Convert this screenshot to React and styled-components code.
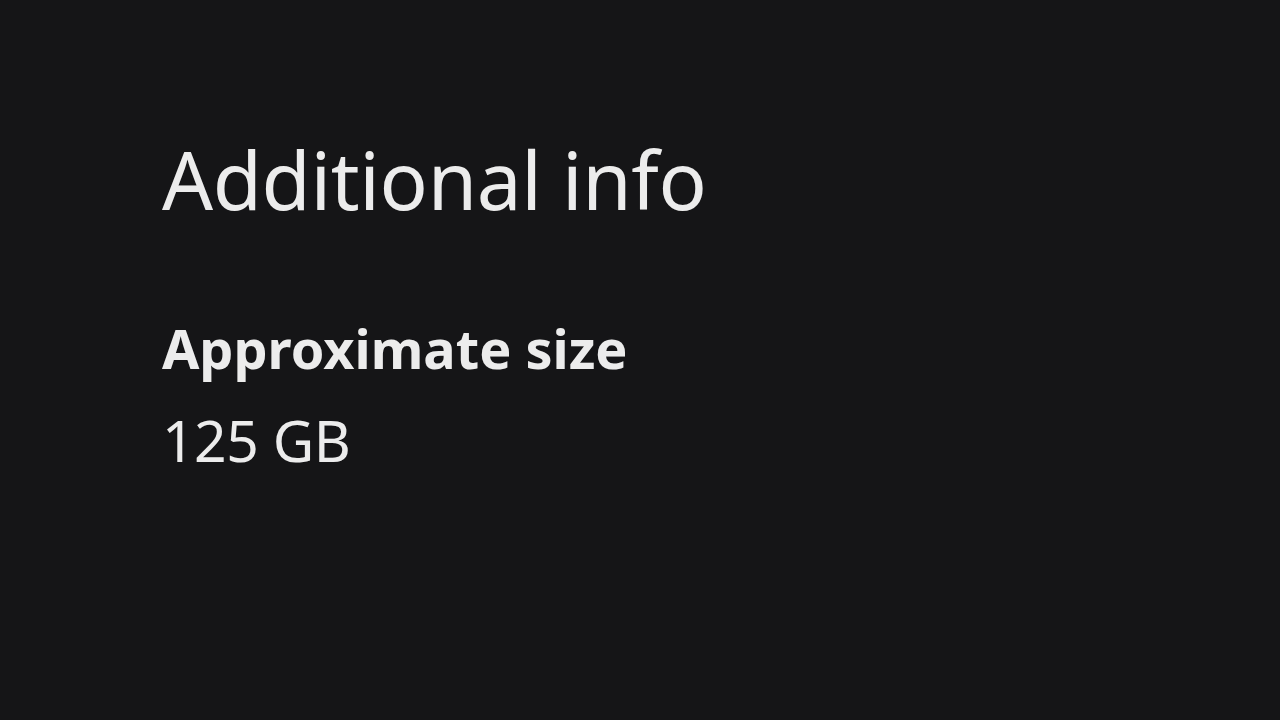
import styled, { createGlobalStyle } from "styled-components"

const GlobalStyle = createGlobalStyle`
  html, body {
    margin: 0;
    padding: 0;
    background: #151517;
  }
  body {
    font-family: "Noto Sans", "Open Sans", sans-serif;
  }
`

function App() {
  return (
    <Page>
      <GlobalStyle />
      <Section>
        <Title>Additional info</Title>
        <Detail>
          <Label>Approximate size</Label>
          <Value>125 GB</Value>
        </Detail>
      </Section>
    </Page>
  )
}

export default App

const Page = styled.div`
  width: 1280px;
  height: 720px;
  background: #151517;
  overflow: hidden;
`

const Section = styled.section`
  display: flex;
  flex-direction: column;
  padding: 125px 0 0 162px;
  color: #ececec;
`

const Title = styled.h1`
  margin: 0;
  font-size: 80px;
  font-weight: 400;
  line-height: 108px;
  letter-spacing: -0.35px;
`

const Detail = styled.div`
  display: flex;
  flex-direction: column;
  margin-top: 80px;
`

const Label = styled.div`
  font-size: 54px;
  font-weight: 700;
  line-height: 70px;
  letter-spacing: 0;
`

const Value = styled.div`
  margin-top: 22px;
  font-size: 57px;
  font-weight: 400;
  line-height: 70px;
  letter-spacing: -0.5px;
`
